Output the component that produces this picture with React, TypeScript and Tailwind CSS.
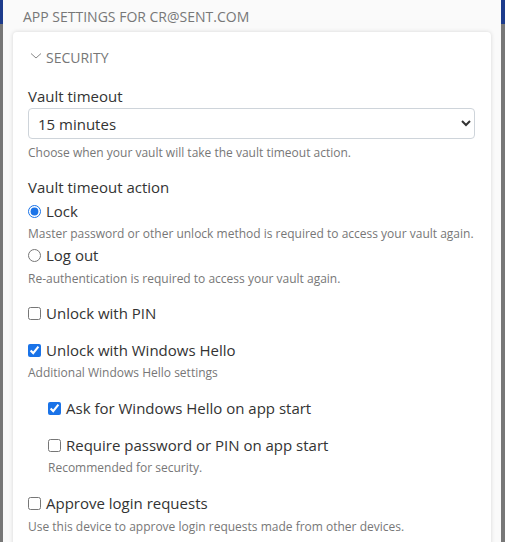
import React from "react"

function Help({ children, className = "" }: { children: React.ReactNode; className?: string }) {
  return <p className={`text-[12px] leading-[17px] text-[#777] ${className}`}>{children}</p>
}

function Check({ label, checked = false, className = "" }: { label: string; checked?: boolean; className?: string }) {
  return (
    <label className={`flex items-center h-[20px] text-[15px] text-[#333] ${className}`}>
      <input type="checkbox" defaultChecked={checked} className="w-[13px] h-[13px] m-0 mr-[5px] accent-[#1a73e8]" />
      {label}
    </label>
  )
}

function Radio({ label, checked = false, className = "" }: { label: string; checked?: boolean; className?: string }) {
  return (
    <label className={`flex items-center h-[20px] text-[15px] text-[#333] ${className}`}>
      <input type="radio" name="action" defaultChecked={checked} className="w-[13px] h-[13px] m-0 mr-[5px] accent-[#1a73e8]" />
      {label}
    </label>
  )
}

export default function App() {
  return (
    <div
      className="w-[505px] h-[542px] overflow-hidden flex bg-[linear-gradient(to_bottom,#1d3c8c_24px,#777_24px)]"
      style={{ fontFamily: '"Open Sans", "Noto Sans", sans-serif' }}
    >
      <div className="flex-1 ml-[3px] mr-[4px] bg-[#fafafa] px-[10px] flex flex-col">
        <h2 className="shrink-0 pt-[7px] pl-[10px] h-[32px] text-[14px] leading-[20px] text-[#777] uppercase">
          App settings for cr@sent.com
        </h2>
        <div className="bg-white rounded-[4px] shadow-[0_0_4px_rgba(0,0,0,0.15)] pl-[15px] pr-[16px] pt-[15px] pb-[20px] flex-1">
          {/* section header */}
          <div className="flex items-center h-[20px] text-[14px] text-[#777] uppercase">
            <svg width="12" height="8" viewBox="0 0 12 8" className="ml-[2px] mr-[4px] -mt-[2px]">
              <path d="M1 1.5 L6 6 L11 1.5" fill="none" stroke="#888" strokeWidth="1" />
            </svg>
            Security
          </div>

          <div className="mt-[19px] h-[20px] text-[15px] leading-[20px] text-[#333]">Vault timeout</div>
          <select
            defaultValue="15"
            className="mt-[2px] w-full h-[31px] border border-[#ced4da] rounded-[4px] pl-[5px] pr-[6px] text-[15px] text-[#333] bg-white"
          >
            <option value="15">15 minutes</option>
          </select>
          <Help className="mt-[5px]">Choose when your vault will take the vault timeout action.</Help>

          <div className="mt-[16px] h-[20px] text-[15px] leading-[20px] text-[#333]">Vault timeout action</div>
          <Radio label="Lock" checked className="mt-[4px]" />
          <Help className="mt-[4px]">Master password or other unlock method is required to access your vault again.</Help>
          <Radio label="Log out" className="mt-[3px]" />
          <Help className="mt-[5px]">Re-authentication is required to access your vault again.</Help>

          <Check label="Unlock with PIN" className="mt-[16px]" />
          <Check label="Unlock with Windows Hello" checked className="mt-[17px]" />
          <Help className="mt-[4px]">Additional Windows Hello settings</Help>
          <div className="pl-[20px]">
            <Check label="Ask for Windows Hello on app start" checked className="mt-[17px]" />
            <Check label="Require password or PIN on app start" className="mt-[17px]" />
            <Help className="mt-[4px]">Recommended for security.</Help>
          </div>

          <Check label="Approve login requests" className="mt-[17px]" />
          <Help className="mt-[5px]">Use this device to approve login requests made from other devices.</Help>
        </div>
      </div>
    </div>
  )
}
